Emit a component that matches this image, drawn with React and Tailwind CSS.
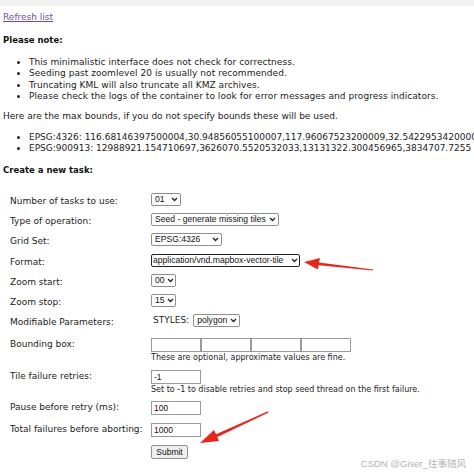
import React from "react";

const Chevron = () => (
  <svg width="7" height="5" viewBox="0 0 7 5" className="ml-[2px] shrink-0">
    <path d="M1 1 L3.5 3.5 L6 1" fill="none" stroke="#222" strokeWidth="1.3" />
  </svg>
);

const arial = { fontFamily: '"Liberation Sans", Arial, sans-serif' };

function Select({ value, width, focused }) {
  return (
    <div
      className={
        focused
          ? "flex h-[13px] items-center justify-between rounded-[2px] border-[1.5px] border-[#222] bg-white pl-[1px] pr-[1px] text-[8.6px] leading-none text-[#111]"
          : "flex h-[13px] items-center justify-between rounded-[2px] border border-[#8f8f8f] bg-white pl-[3px] pr-[2px] text-[8.6px] leading-none text-[#111]"
      }
      style={{ ...arial, width }}
    >
      <span className="whitespace-nowrap">{value}</span>
      <Chevron />
    </div>
  );
}

function Input({ value = "" }) {
  return (
    <div
      className="flex h-[14px] w-[50px] items-center border border-[#9a9a9a] bg-white px-[2px] text-[8.5px] leading-none text-[#111]"
      style={arial}
    >
      {value}
    </div>
  );
}

function Row({ label, children, className = "h-[20px]" }) {
  return (
    <div className={"flex " + className}>
      <div className="w-[141px] shrink-0 pt-[5px] leading-[11px]">{label}</div>
      <div className="pt-[2px]">{children}</div>
    </div>
  );
}

export default function App() {
  return (
    <div
      className="relative h-[475px] w-[474px] overflow-hidden bg-white text-[9px] text-[#222]"
      style={{ fontFamily: '"DejaVu Sans", Verdana, sans-serif' }}
    >
      <div className="h-[6px] bg-[#f1f1f1]" />

      <div className="pl-[3px]">
        <a href="#" className="mt-[6px] block w-max leading-[11px] text-[#6b4fa3] underline">
          Refresh list
        </a>
        <p className="mt-[12px] text-[8.5px] font-bold leading-[11px] text-[#111]">Please note:</p>
        <ul className="mt-[11px] list-disc pl-[26px] leading-[11.3px] tracking-[0.05px]">
          <li>This minimalistic interface does not check for correctness.</li>
          <li>Seeding past zoomlevel 20 is usually not recommended.</li>
          <li>Truncating KML will also truncate all KMZ archives.</li>
          <li>Please check the logs of the container to look for error messages and progress indicators.</li>
        </ul>
        <p className="mt-[9px] leading-[11px]">
          Here are the max bounds, if you do not specify bounds these will be used.
        </p>
        <ul className="mt-[10px] list-disc whitespace-nowrap pl-[26px] leading-[11px]">
          <li>EPSG:4326: 116.68146397500004,30.94856055100007,117.96067523200009,32.54229534200007</li>
          <li>EPSG:900913: 12988921.154710697,3626070.5520532033,13131322.300456965,3834707.7255</li>
        </ul>
        <p className="mt-[11px] text-[8.5px] font-bold leading-[11px] text-[#111]">Create a new task:</p>
      </div>

      <div className="mt-[15px] pl-[10px]">
        <Row label="Number of tasks to use:">
          <Select value="01" width={30} />
        </Row>
        <Row label="Type of operation:">
          <Select value="Seed - generate missing tiles" width={128} />
        </Row>
        <Row label="Grid Set:" className="h-[21px]">
          <Select value="EPSG:4326" width={71} />
        </Row>
        <Row label="Format:">
          <Select value="application/vnd.mapbox-vector-tile" width={149} focused />
        </Row>
        <Row label="Zoom start:">
          <Select value="00" width={25} />
        </Row>
        <Row label="Zoom stop:">
          <Select value="15" width={25} />
        </Row>
        <Row label="Modifiable Parameters:" className="h-[22px]">
          <div className="flex items-center">
            <span className="ml-[2px] mr-[4px] leading-[13px]">STYLES:</span>
            <Select value="polygon" width={47} />
          </div>
        </Row>

        <div className="mt-[4px] flex h-[32px]">
          <div className="w-[141px] shrink-0 pt-[1px] leading-[11px]">Bounding box:</div>
          <div>
            <div className="flex">
              <Input />
              <Input />
              <Input />
              <Input />
            </div>
            <div className="text-[8px] leading-[11px]">These are optional, approximate values are fine.</div>
          </div>
        </div>

        <div className="flex h-[31px]">
          <div className="w-[141px] shrink-0 pt-[1px] leading-[11px]">Tile failure retries:</div>
          <div>
            <Input value="-1" />
            <div className="text-[8px] leading-[11px]">Set to -1 to disable retries and stop seed thread on the first failure.</div>
          </div>
        </div>

        <div className="flex h-[22px]">
          <div className="w-[141px] shrink-0 pt-[1px] leading-[11px]">Pause before retry (ms):</div>
          <Input value="100" />
        </div>

        <div className="flex h-[22px]">
          <div className="w-[141px] shrink-0 pt-[1px] leading-[11px]">Total failures before aborting:</div>
          <Input value="1000" />
        </div>

        <div className="flex">
          <div className="w-[141px] shrink-0" />
          <button
            className="h-[14px] w-[37px] rounded-[2px] border border-[#8f8f8f] bg-[#efefef] text-[8.5px] leading-none text-[#111]"
            style={arial}
          >
            Submit
          </button>
        </div>
      </div>

      <svg className="pointer-events-none absolute left-0 top-0" width="474" height="475">
        <polygon
          points="304,262 320,258 319,262.6 373,269.6 373,270.6 318.6,265.2 318,269.4"
          fill="#e5261d"
        />
        <polygon
          points="200,443 214,430 216,434.3 268,411.3 268.6,412.4 217.4,437 219,441"
          fill="#e5261d"
        />
      </svg>

      <div
        className="absolute bottom-[4px] right-[8px] text-[9.5px] text-[#b4b4b4]"
        style={{ fontFamily: '"Liberation Sans", "Noto Sans CJK SC", sans-serif' }}
      >
        CSDN @Giser_往事随风
      </div>
    </div>
  );
}
